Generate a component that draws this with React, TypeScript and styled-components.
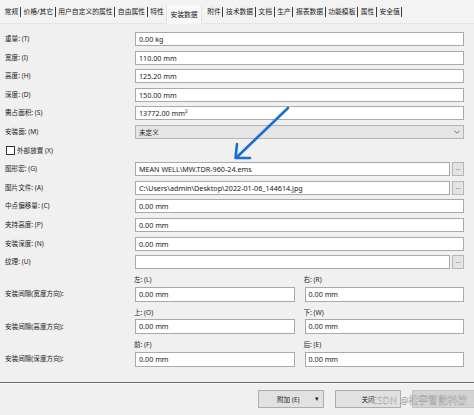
import React from "react";
import styled, { createGlobalStyle } from "styled-components";

const GlobalStyle = createGlobalStyle`
  html, body {
    margin: 0;
    padding: 0;
    background: #f0f0f0;
  }
  body {
    font-family: "Noto Sans", "Noto Sans CJK SC", sans-serif;
    color: #1a1a1a;
  }
`;

type FieldDef = {
  label: string;
  value?: string;
  kind?: "text" | "browse" | "select" | "check";
};

const tabs = [
  "常规",
  "价格/其它",
  "用户自定义的属性",
  "自由属性",
  "特性",
  "安装数据",
  "附件",
  "技术数据",
  "文档",
  "生产",
  "报表数据",
  "功能模板",
  "属性",
  "安全值",
];
const activeTab = 5;

const fields: FieldDef[] = [
  { label: "重量: (T)", value: "0.00 kg" },
  { label: "宽度: (I)", value: "110.00 mm" },
  { label: "高度: (H)", value: "125.20 mm" },
  { label: "深度: (D)", value: "150.00 mm" },
  { label: "需占面积: (S)", value: "13772.00 mm²" },
  { label: "安装面: (M)", value: "未定义", kind: "select" },
  { label: "外部放置 (X)", kind: "check" },
  { label: "图形宏: (G)", value: "MEAN WELL\\MW.TDR-960-24.ems", kind: "browse" },
  {
    label: "图片文件: (A)",
    value: "C:\\Users\\admin\\Desktop\\2022-01-06_144614.jpg",
    kind: "browse",
  },
  { label: "中点偏移量: (C)", value: "0.00 mm" },
  { label: "夹持高度: (P)", value: "0.00 mm" },
  { label: "安装深度: (N)", value: "0.00 mm" },
  { label: "纹理: (U)", value: "", kind: "browse" },
];

const gaps = [
  { label: "安装间隙(宽度方向):", a: "左: (L)", b: "右: (R)" },
  { label: "安装间隙(高度方向):", a: "上: (O)", b: "下: (W)" },
  { label: "安装间隙(深度方向):", a: "前: (F)", b: "后: (E)" },
];

const Field: React.FC<{ field: FieldDef }> = ({ field }) => {
  if (field.kind === "check") {
    return (
      <CheckRow>
        <CheckBox />
        <Label>{field.label}</Label>
      </CheckRow>
    );
  }
  return (
    <Row>
      <Label>{field.label}</Label>
      {field.kind === "select" ? (
        <Select>
          <span>{field.value}</span>
          <svg width="6" height="4" viewBox="0 0 6 4">
            <path d="M0.5 0.8 L3 3.2 L5.5 0.8" fill="none" stroke="#444" strokeWidth="0.7" />
          </svg>
        </Select>
      ) : field.kind === "browse" ? (
        <BrowseRow>
          <TextBox>{field.value}</TextBox>
          <BrowseButton>...</BrowseButton>
        </BrowseRow>
      ) : (
        <TextBox>{field.value}</TextBox>
      )}
    </Row>
  );
};

const App: React.FC = () => {
  return (
    <>
      <GlobalStyle />
      <Window>
        <TabStrip>
          {tabs.map((t, i) => (
            <Tab key={t} $active={i === activeTab} $noSep={i === activeTab - 1 || i === activeTab}>
              {t}
            </Tab>
          ))}
        </TabStrip>

        <Form>
          {fields.map((f) => (
            <Field key={f.label} field={f} />
          ))}
          {gaps.map((g) => (
            <GapGroup key={g.label}>
              <span />
              <GapLabel>{g.a}</GapLabel>
              <GapLabel>{g.b}</GapLabel>
              <Label>{g.label}</Label>
              <TextBox $tall>0.00 mm</TextBox>
              <TextBox $tall>0.00 mm</TextBox>
            </GapGroup>
          ))}
        </Form>

        <Divider />
        <Footer>
          <Button $split>
            <span>附加 (E)</span>
            <span>▾</span>
          </Button>
          <Button>关闭</Button>
          <Button $disabled />
        </Footer>

        <Arrow width="474" height="415" viewBox="0 0 474 415">
          <path
            d="M288 108 L237 157 M237 144 L235.5 158 L250 158"
            fill="none"
            stroke="#1b70cf"
            strokeWidth="2.6"
            strokeLinecap="round"
            strokeLinejoin="round"
          />
        </Arrow>
        <Watermark>CSDN @松宇智能科技</Watermark>
      </Window>
    </>
  );
};

export default App;

const Window = styled.div`
  position: relative;
  width: 474px;
  height: 415px;
  overflow: hidden;
  background: #f0f0f0;
`;

const TabStrip = styled.div`
  display: flex;
  align-items: flex-end;
  height: 24px;
  padding-left: 2px;
  box-sizing: border-box;
  border-bottom: 1px solid #e4e4e4;
  background: #f3f3f3;
`;

const Tab = styled.div<{ $active?: boolean; $noSep?: boolean }>`
  position: relative;
  font-size: 6.8px;
  line-height: 10px;
  padding: ${(p) => (p.$active ? "5px 3px 4px" : "0 2.6px 4px")};
  color: #222;
  white-space: nowrap;
  background: ${(p) => (p.$active ? "#f8f8f8" : "transparent")};
  margin-bottom: ${(p) => (p.$active ? "-1px" : "2px")};
  ${(p) =>
    p.$noSep
      ? ""
      : `
    &::after {
      content: "";
      position: absolute;
      right: 0;
      top: 0;
      width: 1px;
      height: 10px;
      background: #3a3a3a;
    }
  `}
  ${(p) =>
    p.$active
      ? "border-right: 1px solid #e2e2e2; border-left: 1px solid #e2e2e2; margin-right: 3px;"
      : ""}
`;

const Form = styled.div`
  display: flex;
  flex-direction: column;
  gap: 4.6px;
  padding: 8px 10px 0 5px;
`;

const Row = styled.div`
  display: grid;
  grid-template-columns: 130px 1fr;
  align-items: center;
  height: 14px;
`;

const CheckRow = styled.div`
  display: flex;
  align-items: center;
  gap: 2px;
  height: 14px;
  padding-left: 1px;
`;

const CheckBox = styled.div`
  width: 7px;
  height: 7px;
  border: 1px solid #333;
  background: #fff;
`;

const Label = styled.div`
  font-size: 6.6px;
  line-height: 12px;
  color: #222;
  white-space: nowrap;
`;

const GapLabel = styled(Label)`
  margin-left: -1px;
`;

const TextBox = styled.div<{ $tall?: boolean }>`
  box-sizing: border-box;
  height: ${(p) => (p.$tall ? "15px" : "14px")};
  border: 1px solid #a9a9a9;
  background: #fff;
  padding: 0 3px;
  font-size: 7.2px;
  line-height: ${(p) => (p.$tall ? "13px" : "12px")};
  color: #1a1a1a;
  white-space: nowrap;
  overflow: hidden;
  flex: 1;
`;

const BrowseRow = styled.div`
  display: flex;
  gap: 2px;
`;

const BrowseButton = styled.div`
  box-sizing: border-box;
  width: 12px;
  height: 14px;
  border: 1px solid #b5b5b5;
  background: #e4e4e4;
  font-size: 6px;
  line-height: 11px;
  text-align: center;
  color: #444;
`;

const Select = styled.div`
  box-sizing: border-box;
  height: 14px;
  display: flex;
  align-items: center;
  justify-content: space-between;
  border: 1px solid #b5b5b5;
  background: #e5e5e5;
  padding: 0 3px;
  font-size: 6.6px;
  color: #1a1a1a;
`;

const GapGroup = styled.div`
  display: grid;
  grid-template-columns: 120px 1fr 1fr;
  grid-template-rows: 13px 15px;
  column-gap: 10px;
  align-items: center;
`;

const Divider = styled.div`
  margin-top: 15px;
  height: 1px;
  background: #6b6b6b;
  border-bottom: 1px solid #fafafa;
`;

const Footer = styled.div`
  display: flex;
  justify-content: flex-end;
  gap: 11px;
  padding-top: 6px;
  margin-right: -4px;
`;

const Button = styled.div<{ $split?: boolean; $disabled?: boolean }>`
  box-sizing: border-box;
  width: 66px;
  height: 18px;
  display: flex;
  align-items: center;
  justify-content: ${(p) => (p.$split ? "space-between" : "center")};
  padding: ${(p) => (p.$split ? "0 4px 0 18px" : "0")};
  border: 1px solid ${(p) => (p.$disabled ? "#c4c4c4" : "#adadad")};
  background: ${(p) => (p.$disabled ? "#d3d3d3" : "#e1e1e1")};
  font-size: 6.6px;
  color: #222;
`;

const Arrow = styled.svg`
  position: absolute;
  left: 0;
  top: 0;
  pointer-events: none;
`;

const Watermark = styled.div`
  position: absolute;
  left: 371px;
  top: 394px;
  font-family: "Noto Sans", "Noto Sans CJK SC", sans-serif;
  font-size: 9.8px;
  line-height: 14px;
  color: rgba(255, 255, 255, 0.85);
  -webkit-text-stroke: 0.35px rgba(120, 120, 120, 0.8);
  white-space: nowrap;
  pointer-events: none;
`;
